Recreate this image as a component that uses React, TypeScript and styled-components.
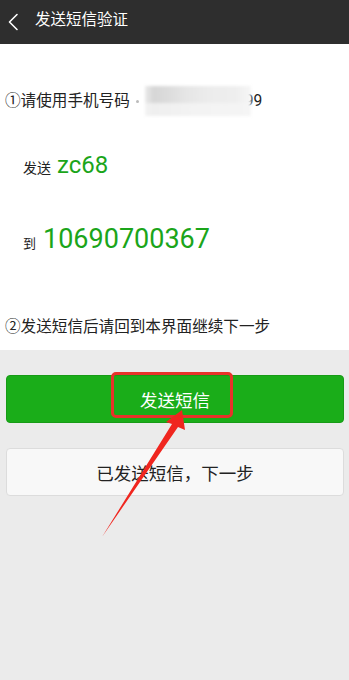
import React from 'react';
import styled, { createGlobalStyle } from 'styled-components';

const GlobalStyle = createGlobalStyle`
  html, body {
    margin: 0;
    padding: 0;
    background: #ebebeb;
  }
  body {
    font-family: Roboto, "Noto Sans CJK SC", "Noto Sans", sans-serif;
    -webkit-font-smoothing: antialiased;
  }
`;

const Page = styled.div`
  position: relative;
  width: 349px;
  height: 680px;
  overflow: hidden;
  background: #ebebeb;
`;

const Header = styled.div`
  height: 44px;
  background: #2e2e2e;
  display: flex;
  align-items: center;
  color: #fff;
`;

const BackButton = styled.div`
  width: 35px;
  height: 44px;
  display: flex;
  align-items: center;
  justify-content: flex-start;
  padding-left: 7px;
  box-sizing: border-box;
`;

const Title = styled.div`
  font-size: 15.5px;
  line-height: 20px;
  margin-top: -4px;
`;

const Body = styled.div`
  background: #fff;
  height: 306px;
  box-sizing: border-box;
  padding: 42px 0 0 5px;
  color: #222;
`;

const Step = styled.div`
  font-size: 15.6px;
  line-height: 22px;
  display: flex;
  align-items: center;
  white-space: nowrap;
`;

// blurred-out part of the phone number
const Mosaic = styled.span`
  display: inline-block;
  width: 106px;
  height: 30px;
  margin: 0 -6px 0 6px;
  position: relative;
  z-index: 1;
  background:
    linear-gradient(180deg, rgba(255,255,255,0) 0%, rgba(255,255,255,0) 55%, rgba(245,245,245,0.8) 56%, rgba(245,245,245,0.8) 100%),
    linear-gradient(90deg, #ebebeb 0%, #d6d6d6 8%, #dcdcdc 22%, #e6e6e6 40%, #ececec 60%, #eeeeee 85%, #f6f6f6 100%);
  filter: blur(1.5px);
`;

const Dot = styled.span`
  display: inline-block;
  width: 3px;
  height: 3px;
  border-radius: 50%;
  background: #bbb;
  margin-left: 6px;
`;

const CodeRow = styled.div<{ $top: number }>`
  display: flex;
  align-items: baseline;
  padding-left: 18px;
  margin-top: ${p => p.$top}px;
  white-space: nowrap;
`;

const Label = styled.span<{ $size: number; $gap: number }>`
  font-size: ${p => p.$size}px;
  color: #222;
  margin-right: ${p => p.$gap}px;
`;

const GreenText = styled.span<{ $size: number }>`
  font-family: Roboto, "Noto Sans", sans-serif;
  font-size: ${p => p.$size}px;
  color: #1ba51a;
  line-height: 1;
`;

const StepTwo = styled(Step)`
  margin-top: 63px;
`;

const Actions = styled.div`
  padding: 25px 5px 0 6px;
  display: flex;
  flex-direction: column;
  gap: 25px;
`;

const Button = styled.div<{ $primary?: boolean }>`
  position: relative;
  height: 48px;
  box-sizing: border-box;
  border-radius: 4px;
  display: flex;
  align-items: center;
  justify-content: center;
  font-size: 17.5px;
  background: ${p => (p.$primary ? '#1aad19' : '#f8f8f8')};
  color: ${p => (p.$primary ? '#fff' : '#222')};
  border: 1px solid ${p => (p.$primary ? '#179b16' : '#dcdcdc')};
`;

// red annotation box drawn over the send button
const Highlight = styled.div`
  position: absolute;
  left: 104px;
  top: -4px;
  width: 122px;
  height: 46px;
  box-sizing: border-box;
  border: 3px solid #e8322a;
  border-radius: 5px;
`;

const ArrowLayer = styled.svg`
  position: absolute;
  left: 0;
  top: 0;
  pointer-events: none;
`;

const ChevronLeft = () => (
  <svg width="12" height="18" viewBox="0 0 12 18">
    <path d="M10 1.5 L2.5 9 L10 16.5" fill="none" stroke="#fff" strokeWidth="1.6" strokeLinecap="round" strokeLinejoin="round" />
  </svg>
);

const App: React.FC = () => {
  return (
    <>
      <GlobalStyle />
      <Page>
        <Header>
          <BackButton>
            <ChevronLeft />
          </BackButton>
          <Title>发送短信验证</Title>
        </Header>

        <Body>
          <Step>
            ①请使用手机号码<Dot />
            <Mosaic />
            <span>99</span>
          </Step>

          <CodeRow $top={37}>
            <Label $size={14} $gap={6}>发送</Label>
            <GreenText $size={24}>zc68</GreenText>
          </CodeRow>

          <CodeRow $top={49}>
            <Label $size={13} $gap={7}>到</Label>
            <GreenText $size={27}>10690700367</GreenText>
          </CodeRow>

          <StepTwo>②发送短信后请回到本界面继续下一步</StepTwo>
        </Body>

        <Actions>
          <Button $primary>
            发送短信
            <Highlight />
          </Button>
          <Button>已发送短信，下一步</Button>
        </Actions>

        {/* red annotation arrow */}
        <ArrowLayer width="349" height="680" viewBox="0 0 349 680">
          <polygon
            points="182,410 185,430 178,427 102,537 172,424 166,422"
            fill="#f0261f"
          />
        </ArrowLayer>
      </Page>
    </>
  );
};

export default App;
